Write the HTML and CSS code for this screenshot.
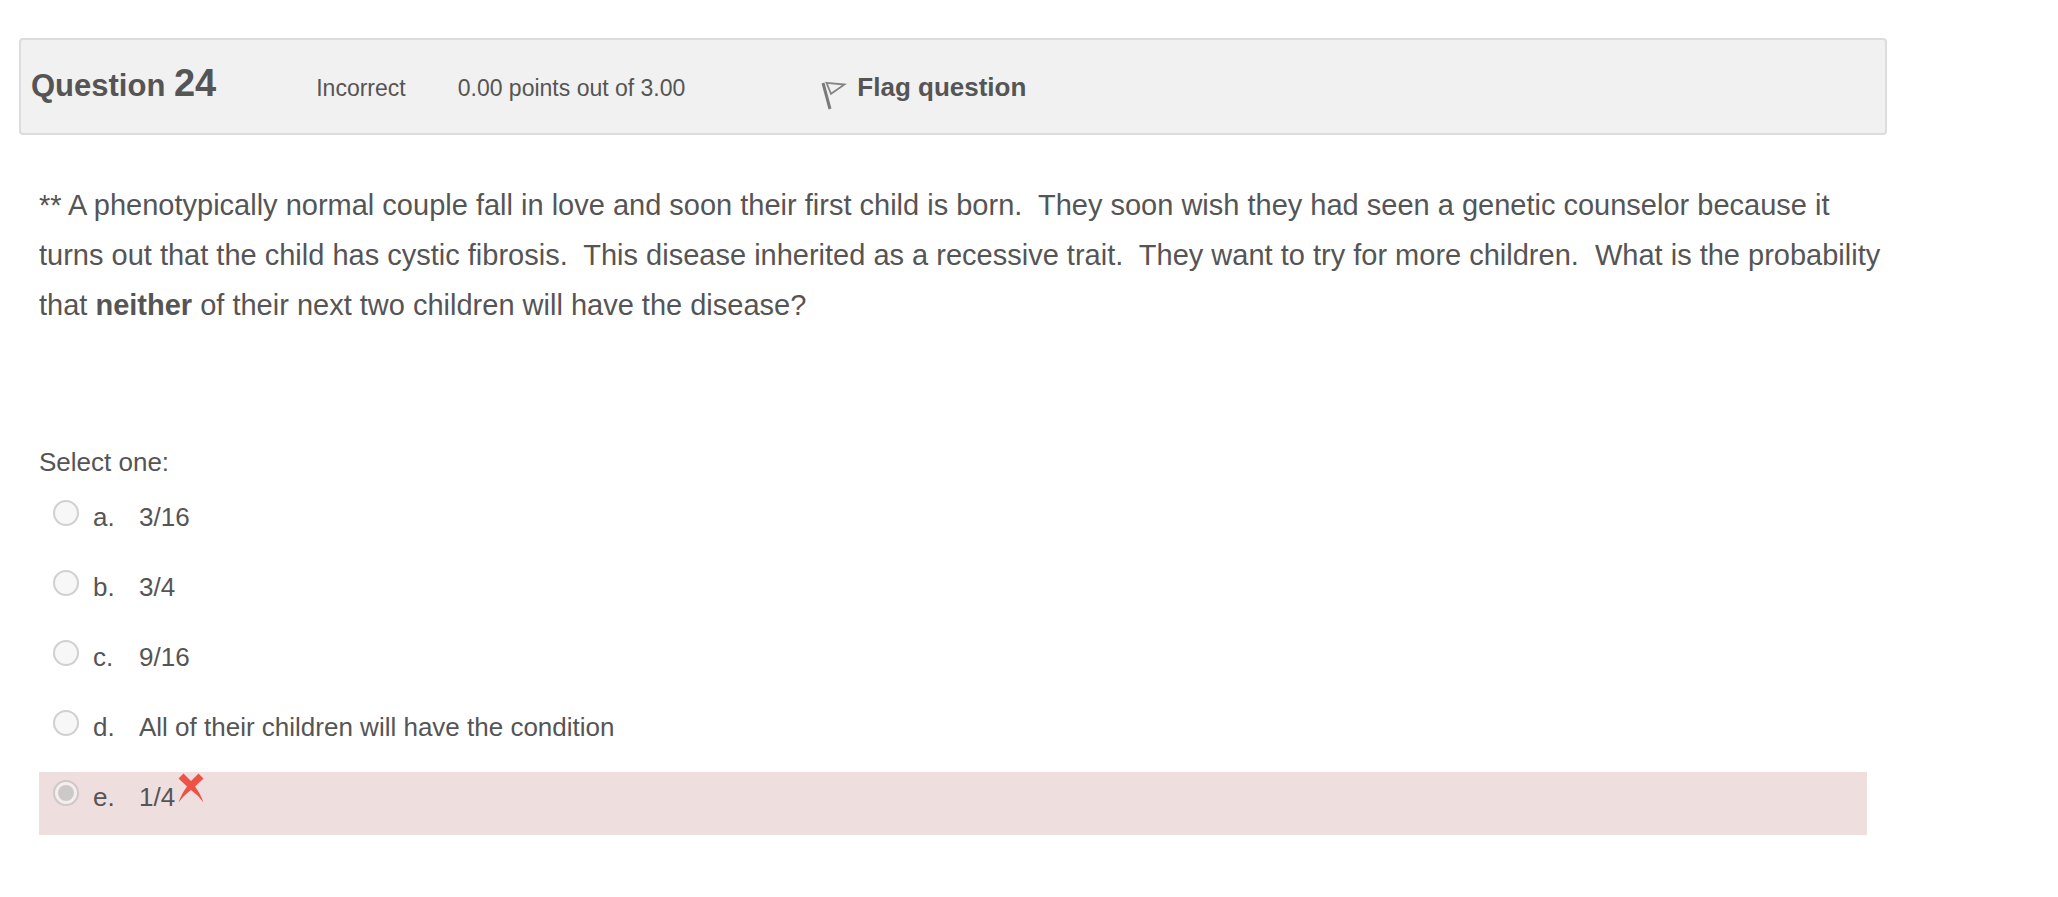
FILE: index.html
```
<!DOCTYPE html>
<html lang="en">
<head>
<meta charset="utf-8">
<title>Question 24</title>
<link rel="stylesheet" href="styles.css">
</head>
<body>
<main class="question">
  <header class="info">
    <h1 class="number">Question <span class="qno">24</span></h1>
    <div class="state">Incorrect</div>
    <div class="grade">0.00 points out of 3.00</div>
    <button class="flag" type="button">
      <svg class="flag-icon" width="26" height="30" viewBox="0 0 26 30" aria-hidden="true">
        <path d="M2 2L9 28" fill="none" stroke="#7a7a7a" stroke-width="3"/>
        <path d="M5.500 1.800L23.500 3.500L10 12.800Z" fill="none" stroke="#858585" stroke-width="1.800"/>
      </svg>
      <span class="flag-label">Flag question</span>
    </button>
  </header>
  <section class="content">
    <p class="text">** A phenotypically normal couple fall in love and soon their first child is born.&nbsp; They soon wish they had seen a genetic counselor because it turns out that the child has cystic fibrosis.&nbsp; This disease inherited as a recessive trait.&nbsp; They want to try for more children.&nbsp; What is the probability that <strong>neither</strong> of their next two children will have the disease?</p>
    <fieldset class="answers">
      <legend class="prompt">Select one:</legend>
      <div class="option"><input class="radio" type="radio" name="answer" id="a" disabled><label class="answer" for="a"><span class="letter">a.</span>3/16</label></div>
      <div class="option"><input class="radio" type="radio" name="answer" id="b" disabled><label class="answer" for="b"><span class="letter">b.</span>3/4</label></div>
      <div class="option"><input class="radio" type="radio" name="answer" id="c" disabled><label class="answer" for="c"><span class="letter">c.</span>9/16</label></div>
      <div class="option"><input class="radio" type="radio" name="answer" id="d" disabled><label class="answer" for="d"><span class="letter">d.</span>All of their children will have the condition</label></div>
      <div class="option incorrect"><input class="radio" type="radio" name="answer" id="e" disabled checked><label class="answer" for="e"><span class="letter">e.</span>1/4</label>
        <svg class="cross" width="26" height="30" viewBox="0 0 26 30" role="img" aria-label="Incorrect">
          <path d="M5.500 0.500L13 8L20.500 0.500L25.500 5.500L17 13.500Q22 20 25.500 29.500Q20 22 13 17Q6 22 0.500 29.500Q4 20 9 13.500L0.500 5.500Z" fill="#ee5145"/>
        </svg>
      </div>
    </fieldset>
  </section>
</main>
</body>
</html>
```
FILE: styles.css
```
* {
  box-sizing: border-box;
}

body {
  margin: 0;
  background: #fff;
  color: #555;
  font-family: "Liberation Sans", Arial, sans-serif;
  font-size: 26px;
}

.question {
  padding: 38px 171px 0 19px;
}

.info {
  display: flex;
  align-items: baseline;
  padding: 20px 10px 22px;
  border: 2px solid #dcdcdc;
  border-radius: 4px;
  background: #f1f1f1;
  line-height: 46px;
}

.number {
  margin: 0 100px 0 0;
  font-size: 31px;
}

.qno {
  font-size: 38px;
}

.state,
.grade {
  font-size: 23px;
}

.state {
  margin-right: 52px;
}

.grade {
  margin-right: 136px;
}

.flag {
  display: flex;
  align-items: baseline;
  gap: 10px;
  padding: 0;
  border: 0;
  background: none;
  color: inherit;
  font: bold 26px/32px "Liberation Sans", Arial, sans-serif;
}

.flag-icon {
  align-self: flex-start;
  margin: 10px 0 -8px;
}

.content {
  padding: 45px 20px 0;
}

.text {
  margin: 0 -14px 0 0;
  font-size: 29px;
  line-height: 50px;
}

.answers {
  margin: 117px 0 0;
  padding: 0;
  border: 0;
}

.prompt {
  margin-bottom: 15px;
  padding: 0;
  line-height: 30px;
}

.option {
  display: flex;
  align-items: flex-start;
  min-height: 63px;
  margin-bottom: 7px;
  padding-left: 14px;
}

.radio {
  appearance: none;
  display: grid;
  place-content: center;
  width: 26px;
  height: 26px;
  margin: 8px 14px 0 0;
  border: 2px solid #d0d0d0;
  border-radius: 50%;
  background: #f7f7f7;
}

.answer {
  display: flex;
  padding-top: 10px;
  line-height: 30px;
}

.letter {
  width: 46px;
}

.incorrect {
  background: #efdede;
}

.incorrect .radio {
  border-color: #cec8c8;
  background: #f5eeee;
}

.radio:checked::before {
  content: "";
  width: 16px;
  height: 16px;
  border-radius: 50%;
  background: #cec9c9;
}

.cross {
  margin: 1px 0 0 3px;
}
```
